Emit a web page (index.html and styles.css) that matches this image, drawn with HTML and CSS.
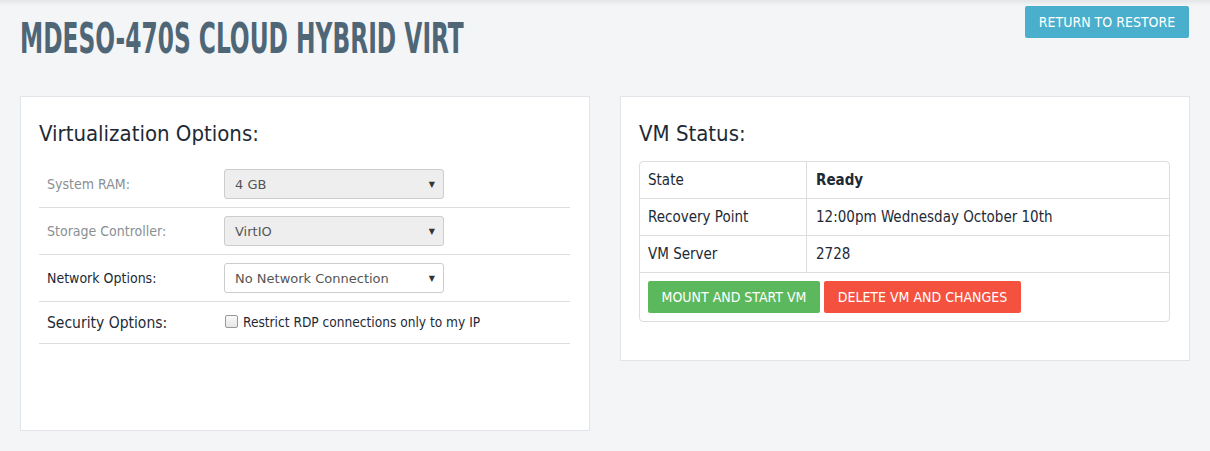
FILE: index.html
```html
<!DOCTYPE html>
<html>
<head>
<meta charset="utf-8">
<link rel="stylesheet" href="styles.css">
</head>
<body>
<div class="page">
  <header class="header">
    <h1 class="title"><span class="title-text">MDESO-470S CLOUD HYBRID VIRT</span></h1>
    <button class="btn btn-info">RETURN TO RESTORE</button>
  </header>
  <main class="panels">
    <section class="panel panel-left">
      <h2 class="panel-title">Virtualization Options:</h2>
      <div class="form-row">
        <label class="form-label muted">System RAM:</label>
        <div class="select disabled"><span>4 GB</span><span class="caret">▼</span></div>
      </div>
      <div class="form-row">
        <label class="form-label muted">Storage Controller:</label>
        <div class="select disabled"><span>VirtIO</span><span class="caret">▼</span></div>
      </div>
      <div class="form-row">
        <label class="form-label">Network Options:</label>
        <div class="select"><span>No Network Connection</span><span class="caret">▼</span></div>
      </div>
      <div class="form-row row-security">
        <label class="form-label large">Security Options:</label>
        <label class="check"><span class="checkbox"></span>Restrict RDP connections only to my IP</label>
      </div>
    </section>
    <section class="panel panel-right">
      <h2 class="panel-title">VM Status:</h2>
      <div class="status-table">
        <div class="trow"><div class="tcell key">State</div><div class="tcell val strong">Ready</div></div>
        <div class="trow"><div class="tcell key">Recovery Point</div><div class="tcell val">12:00pm Wednesday October 10th</div></div>
        <div class="trow"><div class="tcell key">VM Server</div><div class="tcell val">2728</div></div>
        <div class="actions">
          <button class="btn btn-success">MOUNT AND START VM</button>
          <button class="btn btn-danger">DELETE VM AND CHANGES</button>
        </div>
      </div>
    </section>
  </main>
</div>
</body>
</html>
```

FILE: styles.css
```css
html, body {
  margin: 0;
  padding: 0;
}
body {
  background: #f4f5f7;
  font-family: "DejaVu Sans Condensed", "DejaVu Sans", sans-serif;
  font-stretch: condensed;
  color: #1d2a36;
}
.page {
  width: 1210px;
  height: 451px;
  background: linear-gradient(#e4e5e7 0px, #f4f5f7 6px);
  box-sizing: border-box;
}
.header {
  display: flex;
  justify-content: space-between;
  align-items: flex-start;
  padding: 6px 21px 0 20px;
  height: 96px;
  box-sizing: border-box;
}
.title {
  margin: 12px 0 0 0;
  font-size: 42px;
  line-height: 42px;
  font-weight: bold;
  color: #4f6677;
  white-space: nowrap;
  letter-spacing: 0;
  width: 450px;
}
.title-text {
  display: inline-block;
  transform: scaleX(0.617);
  transform-origin: left center;
}
.btn {
  border: none;
  border-radius: 2px;
  color: #fff;
  font-family: "DejaVu Sans Condensed", "DejaVu Sans", sans-serif;
  font-stretch: condensed;
  font-size: 14px;
  height: 32px;
  padding: 0;
  white-space: nowrap;
  cursor: pointer;
}
.btn-info {
  background: #4aafcd;
  width: 164px;
}
.btn-success {
  background: #5cb85c;
  width: 172px;
}
.btn-danger {
  background: #f4513f;
  width: 197px;
}
.panels {
  display: grid;
  grid-template-columns: 570px 570px;
  column-gap: 30px;
  padding: 0 20px;
  align-items: start;
}
.panel {
  background: #fff;
  border: 1px solid #e1e4e8;
  box-sizing: border-box;
  padding: 0 19px 0 18px;
}
.panel-left {
  height: 335px;
}
.panel-right {
  height: 265px;
}
.panel-title {
  margin: 0;
  padding: 22px 0 0 0;
  height: 64px;
  box-sizing: border-box;
  font-weight: normal;
  font-size: 22px;
  line-height: 30px;
  color: #1d2a36;
}
.panel-right .panel-title {
  height: 63px;
}
.form-row {
  display: flex;
  align-items: center;
  height: 47px;
  border-bottom: 1px solid #dddddd;
  box-sizing: border-box;
}
.row-security {
  height: 42px;
}
.form-label {
  width: 177px;
  padding-left: 8px;
  font-size: 14px;
  color: #1d2a36;
}
.form-label.muted {
  color: #8a8f94;
}
.form-label.large {
  font-size: 15.5px;
}
.select {
  width: 220px;
  height: 30px;
  box-sizing: border-box;
  border: 1px solid #cccccc;
  border-radius: 3px;
  display: flex;
  align-items: center;
  justify-content: space-between;
  padding: 0 8px 0 10px;
  font-family: "DejaVu Sans", sans-serif;
  font-stretch: normal;
  font-size: 13px;
  color: #555;
  background: #fff;
}
.select.disabled {
  background: #eeeeee;
}
.caret {
  font-size: 8px;
  color: #333;
}
.check {
  display: flex;
  align-items: center;
  font-size: 13.6px;
  color: #1d2a36;
  margin-top: -2px;
}
.checkbox {
  width: 11px;
  height: 11px;
  border: 1px solid #999;
  border-radius: 2px;
  background: linear-gradient(#fafafa, #e6e6e6);
  margin: 0 5px 0 1px;
}
.status-table {
  border: 1px solid #dddddd;
  border-radius: 4px;
  margin-top: 1px;
}
.trow {
  display: grid;
  grid-template-columns: 167px 1fr;
  height: 37px;
  border-bottom: 1px solid #dddddd;
  box-sizing: border-box;
}
.tcell {
  display: flex;
  align-items: center;
  padding-left: 8px;
  font-size: 15px;
}
.tcell.key {
  border-right: 1px solid #dddddd;
}
.tcell.val {
  padding-left: 9px;
}
.strong {
  font-weight: bold;
}
.actions {
  display: flex;
  gap: 4px;
  padding: 8px 8px 8px 8px;
}
```
